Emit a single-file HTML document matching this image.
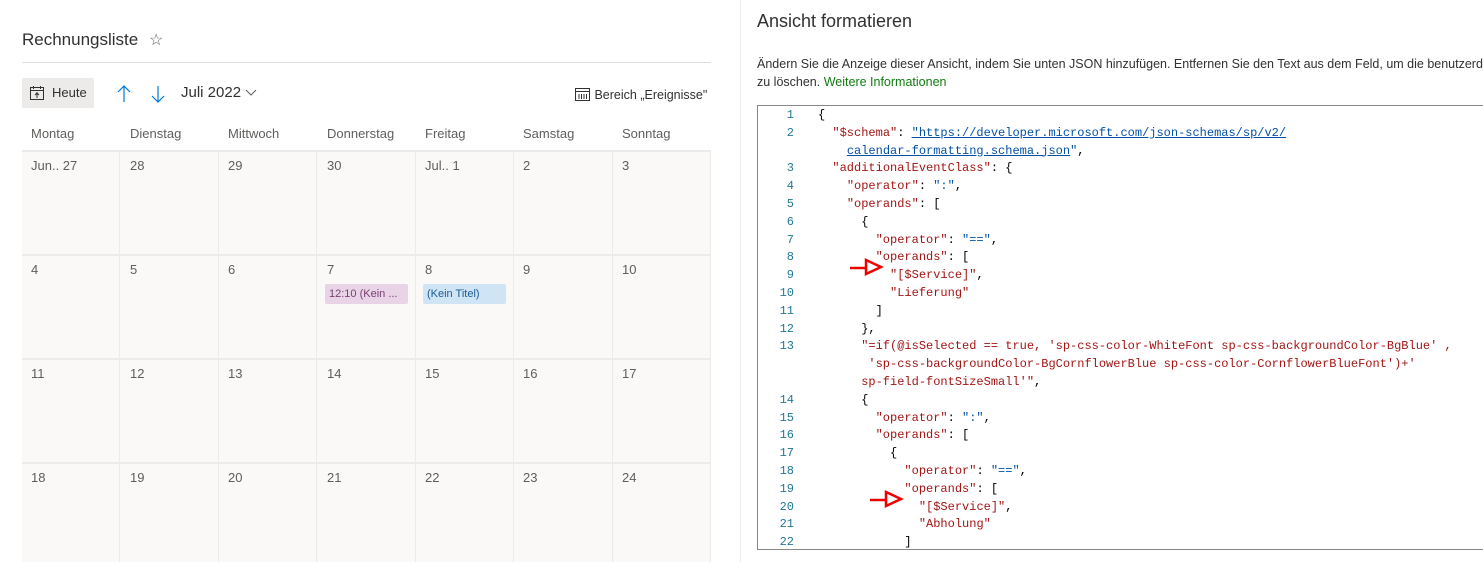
<!DOCTYPE html>
<html><head><meta charset="utf-8"><style>
*{margin:0;padding:0;box-sizing:border-box}
html,body{width:1483px;height:562px;overflow:hidden}
body{background:#fff;font-family:"Liberation Sans",sans-serif;color:#323130;position:relative}
.abs{position:absolute}
.title{left:22px;top:30px;font-size:17px;color:#323130}
.hr{left:22px;top:62px;width:689px;height:1px;background:#e1dfdd}
.heute{left:22px;top:78px;width:72px;height:30px;background:#edebe9;border-radius:2px;font-size:13px;line-height:30px;padding-left:30px}
.dh{top:126px;font-size:13px;color:#605e5c}
.cell{background:#faf9f8;border-right:1px solid #edebe9;border-top:2px solid #edebe9}
.num{font-size:13px;color:#605e5c}
.ev{font-size:11px;height:20px;line-height:20px;padding-left:4px;border-radius:2px}
.vd{left:740px;top:0;width:1px;height:562px;background:#edebe9}
.right{left:741px;top:0;width:742px;height:562px;overflow:hidden}
.code{left:16px;top:105px;width:740px;height:445px;border:1px solid #8a8886}
pre{font-family:"Liberation Mono",monospace;font-size:12px;line-height:17.8px}
.k{color:#a31515}.s{color:#0451a5}.u{color:#0451a5;text-decoration:underline}
.ln{position:absolute;left:0;top:1px;width:36px;text-align:right;color:#237893}
.src{position:absolute;left:60px;top:1px;color:#000}
</style></head><body>
<div class="abs title">Rechnungsliste <span style="font-size:16px;color:#605e5c;margin-left:6px">☆</span></div>
<div class="abs hr"></div>
<div class="abs heute"><svg class="abs" style="left:8px;top:8px" width="14" height="14" viewBox="0 0 14 14" fill="none" stroke="#323130"><rect x="0.5" y="1.5" width="13" height="12"/><path d="M0.5 4.5h13M3.5 0v3M10.5 0v3M7 6v6M5 9l2 -2l2 2"/></svg>Heute</div>
<svg class="abs" style="left:115px;top:84px" width="60" height="20" fill="none" stroke="#0078d4" stroke-width="1.2"><path d="M9 2v16M3 8l6-6l6 6"/><path d="M43 2v16M37 12l6 6l6-6"/></svg>
<div class="abs" style="left:181px;top:84px;font-size:15px;color:#323130">Juli 2022 <svg width="12" height="8" fill="none" stroke="#605e5c"><path d="M1 1l5 5l5-5"/></svg></div>
<div class="abs" style="left:575px;top:87px;font-size:12.5px"><svg width="16" height="14" fill="none" stroke="#323130" style="vertical-align:-2px"><rect x="0.5" y="1.5" width="14" height="12"/><path d="M0.5 4.5h14M4 7v5M6.5 7v5M9 7v5M11.5 7v5"/></svg> Bereich „Ereignisse"</div>
<div class="abs dh" style="left:31px">Montag</div><div class="abs dh" style="left:130px">Dienstag</div><div class="abs dh" style="left:228px">Mittwoch</div><div class="abs dh" style="left:327px">Donnerstag</div><div class="abs dh" style="left:425px">Freitag</div><div class="abs dh" style="left:523px">Samstag</div><div class="abs dh" style="left:622px">Sonntag</div>
<div class="abs" style="left:22px;top:150px;width:689px;height:412px;display:grid;grid-template-columns:repeat(7,1fr);grid-template-rows:repeat(4,104px);overflow:hidden">
<div class="cell"></div><div class="cell"></div><div class="cell"></div><div class="cell"></div><div class="cell"></div><div class="cell"></div><div class="cell"></div>
<div class="cell"></div><div class="cell"></div><div class="cell"></div><div class="cell"></div><div class="cell"></div><div class="cell"></div><div class="cell"></div>
<div class="cell"></div><div class="cell"></div><div class="cell"></div><div class="cell"></div><div class="cell"></div><div class="cell"></div><div class="cell"></div>
<div class="cell"></div><div class="cell"></div><div class="cell"></div><div class="cell"></div><div class="cell"></div><div class="cell"></div><div class="cell"></div>
</div>
<div class="abs num" style="left:31px;top:158px">Jun.. 27</div><div class="abs num" style="left:130px;top:158px">28</div><div class="abs num" style="left:228px;top:158px">29</div><div class="abs num" style="left:327px;top:158px">30</div><div class="abs num" style="left:425px;top:158px">Jul.. 1</div><div class="abs num" style="left:523px;top:158px">2</div><div class="abs num" style="left:622px;top:158px">3</div>
<div class="abs num" style="left:31px;top:262px">4</div><div class="abs num" style="left:130px;top:262px">5</div><div class="abs num" style="left:228px;top:262px">6</div><div class="abs num" style="left:327px;top:262px">7</div><div class="abs num" style="left:425px;top:262px">8</div><div class="abs num" style="left:523px;top:262px">9</div><div class="abs num" style="left:622px;top:262px">10</div>
<div class="abs ev" style="left:325px;top:284px;width:83px;background:#e8d4e6;color:#7a3f75">12:10 (Kein ...</div>
<div class="abs ev" style="left:423px;top:284px;width:83px;background:#cfe4f5;color:#1c5a94">(Kein Titel)</div>
<div class="abs num" style="left:31px;top:366px">11</div><div class="abs num" style="left:130px;top:366px">12</div><div class="abs num" style="left:228px;top:366px">13</div><div class="abs num" style="left:327px;top:366px">14</div><div class="abs num" style="left:425px;top:366px">15</div><div class="abs num" style="left:523px;top:366px">16</div><div class="abs num" style="left:622px;top:366px">17</div>
<div class="abs num" style="left:31px;top:470px">18</div><div class="abs num" style="left:130px;top:470px">19</div><div class="abs num" style="left:228px;top:470px">20</div><div class="abs num" style="left:327px;top:470px">21</div><div class="abs num" style="left:425px;top:470px">22</div><div class="abs num" style="left:523px;top:470px">23</div><div class="abs num" style="left:622px;top:470px">24</div>
<div class="abs vd"></div>
<div class="abs right">
<div class="abs" style="left:16px;top:11px;font-size:18px;color:#323130">Ansicht formatieren</div>
<div class="abs" style="left:16px;top:55px;font-size:12.5px;line-height:18px;color:#323130;white-space:nowrap">Ändern Sie die Anzeige dieser Ansicht, indem Sie unten JSON hinzufügen. Entfernen Sie den Text aus dem Feld, um die benutzerdefinierte Formatierung<br>zu löschen. <span style="color:#107c10">Weitere Informationen</span></div>
<div class="abs code">
<pre class="ln">1
2

3
4
5
6
7
8
9
10
11
12
13


14
15
16
17
18
19
20
21
22</pre>
<pre class="src">{
  <span class="k">"$schema"</span>: <span class="u">"https://developer.microsoft.com/json-schemas/sp/v2/</span>
    <span class="u">calendar-formatting.schema.json</span><span class="s">"</span>,
  <span class="k">"additionalEventClass"</span>: {
    <span class="k">"operator"</span>: <span class="s">":"</span>,
    <span class="k">"operands"</span>: [
      {
        <span class="k">"operator"</span>: <span class="s">"=="</span>,
        <span class="k">"operands"</span>: [
          <span class="k">"[$Service]"</span>,
          <span class="k">"Lieferung"</span>
        ]
      },
      <span class="k">"=if(@isSelected == true, 'sp-css-color-WhiteFont sp-css-backgroundColor-BgBlue' ,
       'sp-css-backgroundColor-BgCornflowerBlue sp-css-color-CornflowerBlueFont')+'
      sp-field-fontSizeSmall'"</span>,
      {
        <span class="k">"operator"</span>: <span class="s">":"</span>,
        <span class="k">"operands"</span>: [
          {
            <span class="k">"operator"</span>: <span class="s">"=="</span>,
            <span class="k">"operands"</span>: [
              <span class="k">"[$Service]"</span>,
              <span class="k">"Abholung"</span>
            ]</pre>
</div>
</div>
<svg class="abs" style="left:848px;top:258px" width="40" height="20" fill="none" stroke="#e00" stroke-width="2.5"><path d="M2 10h16M18 2l15 7l-15 7z"/></svg>
<svg class="abs" style="left:868px;top:490px" width="40" height="20" fill="none" stroke="#e00" stroke-width="2.5"><path d="M2 10h16M18 2l15 7l-15 7z"/></svg>
</body></html>
